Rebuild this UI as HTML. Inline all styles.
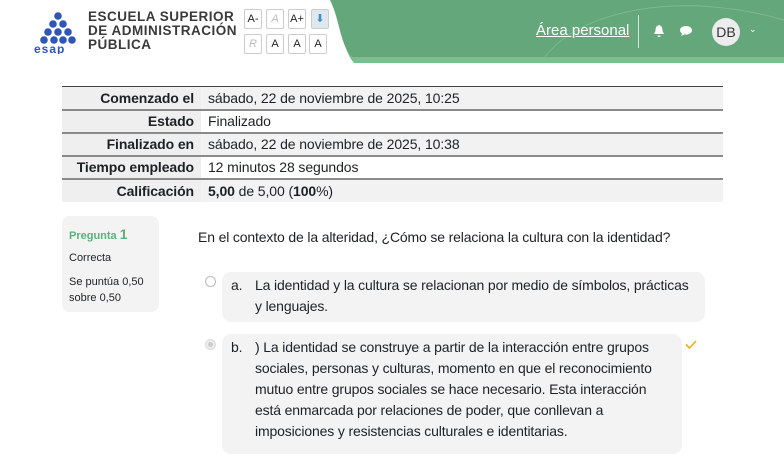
<!DOCTYPE html>
<html><head><meta charset="utf-8"><style>
*{margin:0;padding:0;box-sizing:border-box}
body{width:784px;height:441px;overflow:hidden;background:#fff;font-family:"Liberation Sans",sans-serif;color:#1d2125;position:relative}
.hdr{position:absolute;left:0;top:0;width:784px;height:64px}
.logo{position:absolute;left:34px;top:12px}
.title{position:absolute;left:88px;top:10px;font-weight:bold;font-size:13.5px;line-height:14px;color:#3a3a3a;letter-spacing:0.5px;white-space:nowrap}
.btn{position:absolute;width:18px;height:20px;border:1px solid #ccc;border-radius:2px;background:#fff;font-size:11px;text-align:center;line-height:18px;color:#222}
.nav{position:absolute;top:22px;color:#fff;font-size:15px;left:536px;text-decoration:underline}
table{position:absolute;left:62px;top:86px;width:661px;border-collapse:collapse;font-size:14px;letter-spacing:-0.1px}
td,th{height:23px;padding:0 7px;border-top:2px solid #8a8a8a;vertical-align:middle}
tr:first-child td,tr:first-child th{border-top:1px solid #444}
th{width:139px;text-align:right;background:#efefef;font-weight:bold}
tr.o td{background:#f2f2f2}
.info{position:absolute;left:62px;top:216px;width:97px;height:96px;background:#f3f3f3;border-radius:8px;padding:10px 7px;font-size:11px;line-height:16px}
.q{position:absolute;left:198px;top:229px;font-size:14px;letter-spacing:-0.15px}
.opt{position:absolute;left:222px;background:#f3f3f3;border-radius:9px;font-size:14px;line-height:21px;padding:2px 10px 2px 33px;letter-spacing:-0.15px}
.opt b{position:absolute;left:9px;font-weight:normal}
.rad{position:absolute;left:205px;width:11px;height:11px;border:1px solid #bbb;border-radius:50%;background:#fff}
</style></head><body>
<svg class="hdr" viewBox="0 0 784 64">
<path d="M333 0 C342 22 342 50 354 63 L784 63 L784 0 Z" fill="#7cbf8e"/>
<path d="M330 0 C340 20 340 45 352 57 L784 57 L784 0 Z" fill="#64a77b"/>
<path d="M545 57 C580 10 680 -10 784 20" stroke="#8cc39c" stroke-width="1" fill="none" opacity=".6"/>
</svg>
<svg class="logo" width="50" height="42" viewBox="0 0 50 42">
<g fill="#2e56b5"><circle cx="24" cy="4" r="3.8"/><circle cx="19" cy="12" r="3.8"/><circle cx="29" cy="12" r="3.8"/><circle cx="14" cy="20" r="3.8"/><circle cx="24" cy="20" r="3.8"/><circle cx="34" cy="20" r="3.8"/><circle cx="10" cy="28" r="3.8"/><circle cx="20" cy="28" r="3.8"/><circle cx="29" cy="28" r="3.8"/><circle cx="38" cy="28" r="3.8"/>
<text x="0" y="41" font-family="Liberation Sans" font-weight="bold" font-size="12" letter-spacing="1">esap</text></g>
</svg>
<div class="title">ESCUELA SUPERIOR<br>DE ADMINISTRACIÓN<br>PÚBLICA</div>
<div class="btn" style="left:244px;top:9px">A-</div>
<div class="btn" style="left:266px;top:9px;color:#bbb;font-style:italic">A</div>
<div class="btn" style="left:288px;top:9px">A+</div>
<div class="btn" style="left:311px;top:9px;background:#dfe8ee;color:#3a8fd0">⬇</div>
<div class="btn" style="left:244px;top:34px;color:#bbb;font-style:italic">R</div>
<div class="btn" style="left:266px;top:34px">A</div>
<div class="btn" style="left:288px;top:34px">A</div>
<div class="btn" style="left:309px;top:34px">A</div>
<div class="nav">Área personal</div>
<div style="position:absolute;left:638px;top:15px;width:1px;height:33px;background:#d6e6da"></div>
<svg style="position:absolute;left:653px;top:25px" width="12" height="13" viewBox="0 0 12 13"><path d="M6 0C3 1 2.5 3 2.5 6L1 9H11L9.5 6C9.5 3 9 1 6 0ZM4.5 10.5A1.5 1.5 0 0 0 7.5 10.5Z" fill="#fff"/></svg>
<svg style="position:absolute;left:679px;top:25px" width="14" height="12" viewBox="0 0 14 12"><path d="M7 1C3.5 1 1 3 1 5.3 1 6.6 1.8 7.7 3 8.4L2.3 11 5.4 9.4C6 9.5 6.5 9.6 7 9.6 10.5 9.6 13 7.6 13 5.3 13 3 10.5 1 7 1Z" fill="#fff"/></svg>
<div style="position:absolute;left:712px;top:18px;width:28px;height:28px;border-radius:50%;background:#ececec;color:#333;font-size:14px;text-align:center;line-height:28px">DB</div>
<div style="position:absolute;left:749px;top:24px;color:#fff;font-size:9px">⌄</div>
<table>
<tr class="o"><th>Comenzado el</th><td>sábado, 22 de noviembre de 2025, 10:25</td></tr>
<tr><th>Estado</th><td>Finalizado</td></tr>
<tr class="o"><th>Finalizado en</th><td>sábado, 22 de noviembre de 2025, 10:38</td></tr>
<tr><th>Tiempo empleado</th><td>12 minutos 28 segundos</td></tr>
<tr class="o"><th>Calificación</th><td><strong>5,00</strong> de 5,00 (<strong>100</strong>%)</td></tr>
</table>
<div class="info"><div style="color:#5bb27a;font-weight:bold;font-size:11px;margin-bottom:6px">Pregunta <span style="font-size:14px">1</span></div><div style="margin-bottom:8px">Correcta</div><div>Se puntúa 0,50<br>sobre 0,50</div></div>
<div class="q">En el contexto de la alteridad, ¿Cómo se relaciona la cultura con la identidad?</div>
<div class="rad" style="top:276px"></div>
<div class="opt" style="top:272px;width:483px;height:50px;padding-top:3px;padding-right:16px"><b>a.</b>La identidad y la cultura se relacionan por medio de símbolos, prácticas y lenguajes.</div>
<div class="rad" style="top:339px;background:#ccc;border-color:#ddd;box-shadow:inset 0 0 0 2px #eee"></div>
<div class="opt" style="top:334px;width:460px;height:120px;padding-top:3px"><b>b.</b>) La identidad se construye a partir de la interacción entre grupos sociales, personas y culturas, momento en que el reconocimiento mutuo entre grupos sociales se hace necesario. Esta interacción está enmarcada por relaciones de poder, que conllevan a imposiciones y resistencias culturales e identitarias.</div>
<svg style="position:absolute;left:685px;top:340px" width="12" height="9" viewBox="0 0 12 9"><path d="M1 4.5L4.5 8 11 1" stroke="#f0ad1e" stroke-width="1.6" fill="none"/></svg>
</body></html>
